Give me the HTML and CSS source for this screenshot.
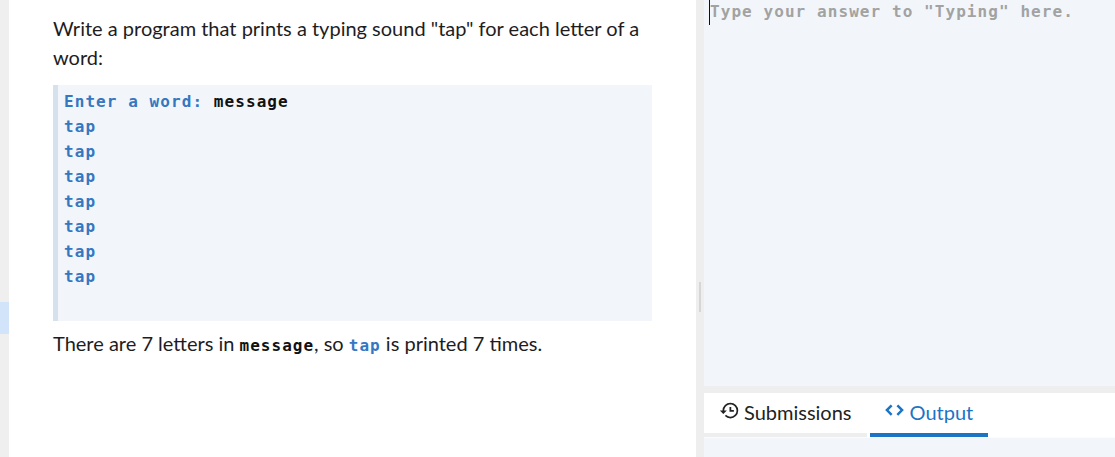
FILE: index.html
```html
<!DOCTYPE html>
<html>
<head>
<meta charset="utf-8">
<link rel="stylesheet" href="styles.css">
</head>
<body>
<div class="page">
  <div class="gutter"><div class="gutter-mark"></div></div>
  <main class="lesson">
    <p class="para first">Write a program that prints a typing sound "tap" for each letter of a word:</p>
    <pre class="code"><span class="blue">Enter a word: </span><span class="black">message</span>
<span class="blue">tap</span>
<span class="blue">tap</span>
<span class="blue">tap</span>
<span class="blue">tap</span>
<span class="blue">tap</span>
<span class="blue">tap</span>
<span class="blue">tap</span></pre>
    <p class="para">There are 7 letters in <code class="inline black">message</code>, so <code class="inline blue">tap</code> is printed 7 times.</p>
  </main>
  <div class="divider"><div class="thumb"></div></div>
  <section class="work">
    <div class="editor"><span class="caret"></span><span class="placeholder">Type your answer to "Typing" here.</span></div>
    <div class="sep"></div>
    <nav class="tabs">
      <div class="tab">
        <svg class="ico" viewBox="0 0 24 24" width="21" height="21"><path fill="#222" d="M13 3a9 9 0 0 0-9 9H1l3.89 3.89.07.14L9 12H6c0-3.870 3.13-7 7-7s7 3.13 7 7-3.13 7-7 7c-1.93 0-3.68-.79-4.94-2.060l-1.42 1.42A8.954 8.954 0 0 0 13 21a9 9 0 0 0 0-18zm-1 5v5.5h5v-2h-3V8h-2z"/></svg>
        <span>Submissions</span>
      </div>
      <div class="tab active">
        <svg class="ico" viewBox="0 0 20 20" width="19" height="19"><path d="M7 4.5 2 9.5l5 5M13 4.5l5 5-5 5" fill="none" stroke="#1b74c4" stroke-width="2.6" stroke-linejoin="miter"/></svg>
        <span>Output</span>
      </div>
      <div class="tab-rest"></div>
    </nav>
    <div class="bottom"></div>
  </section>
</div>
</body>
</html>
```
FILE: styles.css
```css
html, body {
  margin: 0;
  padding: 0;
  height: 457px;
  overflow: hidden;
}
body {
  font-family: Lato, "Open Sans", sans-serif;
  color: #1d1d1f;
}
.page {
  display: flex;
  height: 457px;
}
.gutter {
  width: 9px;
  background: #efefef;
  flex: none;
  padding-top: 302px;
  box-sizing: border-box;
}
.gutter-mark {
  height: 32px;
  background: #d2e4fa;
}
.lesson {
  width: 687px;
  flex: none;
  background: #fff;
  box-sizing: border-box;
  padding: 14px 44px 0 44px;
}
.para {
  font-size: 20px;
  line-height: 29px;
  margin: 0;
}
.para.first {
  margin-bottom: 13px;
}
.code {
  margin: 0 0 8px 0;
  background: #f2f6fa;
  border-left: 5px solid #d5e1ec;
  padding: 4px 0 32px 6px;
  font-family: "DejaVu Sans Mono", monospace;
  font-weight: bold;
  font-size: 16px;
  letter-spacing: 1.07px;
  line-height: 25px;
  white-space: pre;
}
.blue { color: #3577c1; }
.black { color: #111; }
.inline {
  font-family: "DejaVu Sans Mono", monospace;
  font-weight: bold;
  font-size: 16px;
  letter-spacing: 1px;
}
.divider {
  width: 8px;
  flex: none;
  background: #eeeeee;
  padding-top: 282px;
  box-sizing: border-box;
  display: flex;
  justify-content: center;
}
.thumb {
  width: 2px;
  height: 30px;
  background: #d6d6d6;
  margin-left: -1px;
}
.work {
  flex: 1;
  display: flex;
  flex-direction: column;
  background: #eeeeee;
}
.editor {
  height: 386px;
  background: #f2f6fa;
  padding-left: 5px;
  display: flex;
  align-items: flex-start;
  flex: none;
}
.caret {
  width: 1px;
  height: 25px;
  background: #111;
  flex: none;
}
.placeholder {
  font-family: "DejaVu Sans Mono", monospace;
  font-weight: bold;
  font-size: 16px;
  letter-spacing: 1.07px;
  line-height: 24px;
  color: #a2a2a2;
}
.sep {
  height: 7px;
  flex: none;
}
.tabs {
  height: 44px;
  background: #fff;
  display: flex;
  flex: none;
  align-items: stretch;
}
.tab {
  display: flex;
  align-items: center;
  gap: 4px;
  font-size: 20px;
  color: #222;
  border-bottom: 4px solid #eeeeee;
  padding: 0 15px 2px 15px;
  box-sizing: border-box;
}
.tab.active {
  color: #1b74c4;
  border-bottom-color: #1b74c4;
  padding-left: 15px;
  padding-right: 15px;
  margin-left: 3px;
  gap: 6px;
}
.tab-rest {
  flex: 1;
}
.ico {
  flex: none;
  margin-top: -3px;
}
.bottom {
  flex: 1;
  background: #f2f6fa;
  border-top: 1px solid #fafcfd;
}
```
